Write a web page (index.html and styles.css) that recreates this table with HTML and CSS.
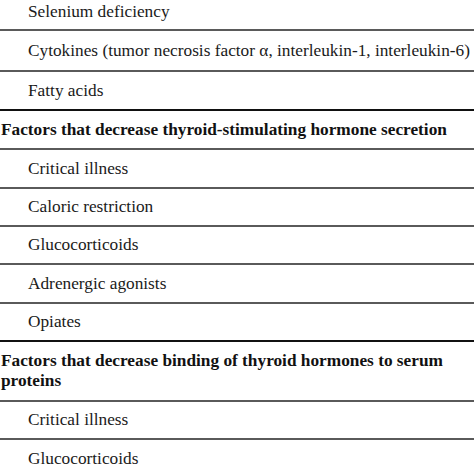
FILE: index.html
```html
<!DOCTYPE html>
<html>
<head>
<meta charset="utf-8">
<link rel="stylesheet" href="styles.css">
</head>
<body>
<div class="table">
  <div class="row first">Selenium deficiency</div>
  <div class="row tall">Cytokines (tumor necrosis factor α, interleukin-1, interleukin-6)</div>
  <div class="row end">Fatty acids</div>
  <div class="row head">Factors that decrease thyroid-stimulating hormone secretion</div>
  <div class="row">Critical illness</div>
  <div class="row short">Caloric restriction</div>
  <div class="row short">Glucocorticoids</div>
  <div class="row">Adrenergic agonists</div>
  <div class="row short end">Opiates</div>
  <div class="row head double">Factors that decrease binding of thyroid hormones to serum proteins</div>
  <div class="row short">Critical illness</div>
  <div class="row">Glucocorticoids</div>
</div>
</body>
</html>
```

FILE: styles.css
```css
html, body {
  margin: 0;
  padding: 0;
  background: #fff;
  overflow: hidden;
}

.table {
  width: 474px;
  margin-top: -6px;
  font-family: "Liberation Serif", "Times New Roman", serif;
  font-size: 17.3px;
  color: #1a1a1a;
  display: flex;
  flex-direction: column;
}

.row {
  display: flex;
  align-items: center;
  height: 37px;
  box-sizing: content-box;
  padding-left: 28px;
  border-bottom: 2px solid #5a5a5a;
  white-space: nowrap;
}

.row.first { height: 35px; }
.row.tall { height: 39px; }
.row.short { height: 36px; }

.row.end { border-bottom-color: #111; }

.row.head {
  padding-left: 1px;
  font-weight: bold;
  color: #111;
}

.row.double {
  height: 58px;
  line-height: 20px;
  white-space: normal;
  padding-right: 20px;
}
```
